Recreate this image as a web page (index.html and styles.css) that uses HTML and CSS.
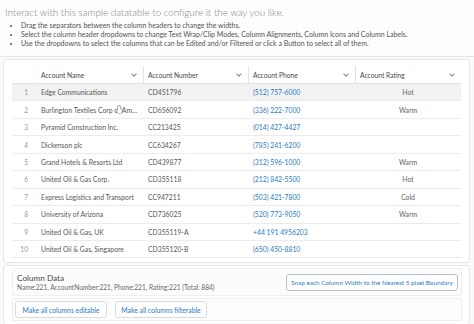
FILE: index.html
```html
<!DOCTYPE html>
<html lang="en">
  <head>
    <meta charset="UTF-8">
    <title>Datatable Configurator</title>
    <link rel="stylesheet" href="styles.css">
  </head>
  <body>
    <div class="intro">
      <h1>Interact with this sample datatable to configure it the way you like.</h1>
      <ul>
        <li>Drag the separators between the column headers to change the widths.</li>
        <li>Select the column header dropdowns to change Text Wrap/Clip Modes, Column Alignments, Column Icons and Column Labels.</li>
        <li>Use the dropdowns to select the columns that can be Edited and/or Filtered or click a Button to select all of them.</li>
      </ul>
    </div>

    <div class="card table-card">
      <table class="grid">
        <colgroup>
          <col class="c-num">
          <col class="c-name">
          <col class="c-acct">
          <col class="c-phone">
          <col class="c-rating">
        </colgroup>
        <thead>
          <tr>
            <th></th>
            <th><div class="th-in"><span>Account Name</span><i class="chev"></i></div></th>
            <th><div class="th-in"><span>Account Number</span><i class="chev"></i></div></th>
            <th><div class="th-in"><span>Account Phone</span><i class="chev"></i></div></th>
            <th><div class="th-in"><span>Account Rating</span><i class="chev"></i></div></th>
          </tr>
        </thead>
        <tbody>
          <tr class="hover"><td class="num">1</td><td>Edge Communications</td><td>CD451796</td><td class="phone">(512) 757-6000</td><td class="rating">Hot</td></tr>
          <tr><td class="num">2</td><td class="clip">Burlington Textiles Corp of America<svg class="cursor" width="8" height="9" viewBox="0 0 8 9"><path d="M2.5 0.8v4.4l-0.9-0.8c-0.4-0.3-0.9 0.1-0.6 0.6l1.6 2.6c0.4 0.7 1 1 1.8 1h0.9c1 0 1.8-0.8 1.8-1.8V4.3c0-0.4-0.6-0.4-0.6 0v-0.5c0-0.4-0.6-0.4-0.6 0v-0.3c0-0.4-0.6-0.4-0.6 0V0.8c0-0.6-0.8-0.6-0.8 0z" fill="#fff" stroke="#666" stroke-width="0.5"/></svg></td><td>CD656092</td><td class="phone">(336) 222-7000</td><td class="rating">Warm</td></tr>
          <tr><td class="num">3</td><td>Pyramid Construction Inc.</td><td>CC213425</td><td class="phone">(014) 427-4427</td><td class="rating"></td></tr>
          <tr><td class="num">4</td><td>Dickenson plc</td><td>CC634267</td><td class="phone">(785) 241-6200</td><td class="rating"></td></tr>
          <tr><td class="num">5</td><td>Grand Hotels &amp; Resorts Ltd</td><td>CD439877</td><td class="phone">(312) 596-1000</td><td class="rating">Warm</td></tr>
          <tr><td class="num">6</td><td>United Oil &amp; Gas Corp.</td><td>CD355118</td><td class="phone">(212) 842-5500</td><td class="rating">Hot</td></tr>
          <tr><td class="num">7</td><td>Express Logistics and Transport</td><td>CC947211</td><td class="phone">(503) 421-7800</td><td class="rating">Cold</td></tr>
          <tr><td class="num">8</td><td>University of Arizona</td><td>CD736025</td><td class="phone">(520) 773-9050</td><td class="rating">Warm</td></tr>
          <tr><td class="num">9</td><td>United Oil &amp; Gas, UK</td><td>CD355119-A</td><td class="phone">+44 191 4956203</td><td class="rating"></td></tr>
          <tr><td class="num">10</td><td>United Oil &amp; Gas, Singapore</td><td>CD355120-B</td><td class="phone">(650) 450-8810</td><td class="rating"></td></tr>
        </tbody>
      </table>
    </div>

    <div class="card bottom-card">
      <div class="col-data">
        <div>
          <div class="col-title">Column Data</div>
          <div class="col-sub">Name:221, AccountNumber:221, Phone:221, Rating:221 (Total: 884)</div>
        </div>
        <button class="btn snap">Snap each Column Width to the Nearest 5 pixel Boundary</button>
      </div>
      <div class="actions">
        <button class="btn">Make all columns editable</button>
        <button class="btn">Make all columns filterable</button>
      </div>
    </div>
  </body>
</html>
```

FILE: styles.css
```css
body {
  margin: 0;
  background: #fafaf9;
  font-family: Lato, "Open Sans", sans-serif;
  color: #4a4846;
}

.intro {
  height: 57px;
  padding: 5px 5px 0;
  border-bottom: 1px solid #e5e5e5;
  background: #fdfdfd;
  box-sizing: border-box;
}

h1 {
  margin: 0;
  font-size: 9.8px;
  font-weight: 300;
  line-height: 14px;
  color: #858381;
}

ul {
  margin: 2px 0 0;
  padding-left: 16px;
  font-size: 7px;
  line-height: 9px;
  color: #55534f;
}

.card {
  background: #fff;
  border: 1px solid #e8e8e8;
  border-radius: 3px;
}

.table-card {
  margin: 2px 4px 0 3px;
  padding: 6px 8px 4px 8px;
}

.grid {
  border-collapse: collapse;
  table-layout: fixed;
  width: 449px;
  font-size: 6.8px;
}

.c-num { width: 24px; }
.c-name { width: 107px; }
.c-acct { width: 105px; }
.c-phone { width: 107px; }
.c-rating { width: 106px; }

th {
  height: 17px;
  padding: 0;
  font-weight: 400;
  font-size: 6.7px;
  color: #4a4846;
  text-align: left;
  border-bottom: 1px solid #e1e1e1;
  box-shadow: 0 1px 1px rgba(0, 0, 0, 0.05);
}

.th-in {
  display: flex;
  align-items: center;
  justify-content: space-between;
  padding: 0 7px 0 5px;
  height: 17px;
}

th + th + th .th-in {
  border-left: 1px solid #e3e3e3;
  padding-left: 4px;
}

.chev {
  width: 3px;
  height: 3px;
  border-right: 0.8px solid #8a8886;
  border-bottom: 0.8px solid #8a8886;
  transform: rotate(45deg);
  margin-top: -2px;
}

td {
  height: 16.44px;
  padding: 0 5px;
  border-bottom: 1px solid #ececec;
  white-space: nowrap;
  overflow: hidden;
  color: #5a5856;
}

tr.hover td {
  background: #f3f2f2;
}

td.num {
  color: #9a9896;
  text-align: right;
  padding: 0 8px 0 0;
  font-size: 6.6px;
}

td.clip {
  position: relative;
  text-overflow: ellipsis;
}

.cursor {
  position: absolute;
  left: 79px;
  top: 4px;
}

td.phone {
  color: #2a7bc8;
}

td.rating {
  text-align: center;
  color: #66646a;
}

.bottom-card {
  margin: 2px 4px 0 3px;
  padding: 2px 7px 3px 8px;
}

.col-data {
  display: flex;
  align-items: center;
  justify-content: space-between;
  height: 26px;
  padding: 0 3px 0 4px;
  background: #fcfcfc;
  border: 1px solid #eeeeee;
  border-radius: 2px;
}

.col-title {
  font-size: 8.2px;
  line-height: 10px;
  color: #4a4846;
}

.col-sub {
  font-size: 6.6px;
  line-height: 8px;
  color: #6a6866;
}

.actions {
  display: flex;
  gap: 8px;
  margin-top: 2px;
  padding: 2px 2px;
  border: 1px solid #eeeeee;
  border-radius: 2px;
  background: #fdfdfd;
}

.btn {
  font-family: Lato, "Open Sans", sans-serif;
  font-size: 6.8px;
  color: #2a7bc8;
  background: #fff;
  border: 1px solid #dddbda;
  border-radius: 3px;
  height: 17px;
  padding: 0;
  white-space: nowrap;
}

.snap {
  font-size: 6.4px;
  border-color: #b4c3d3;
  width: 172px;
}

.actions .btn {
  width: 92px;
}
```
